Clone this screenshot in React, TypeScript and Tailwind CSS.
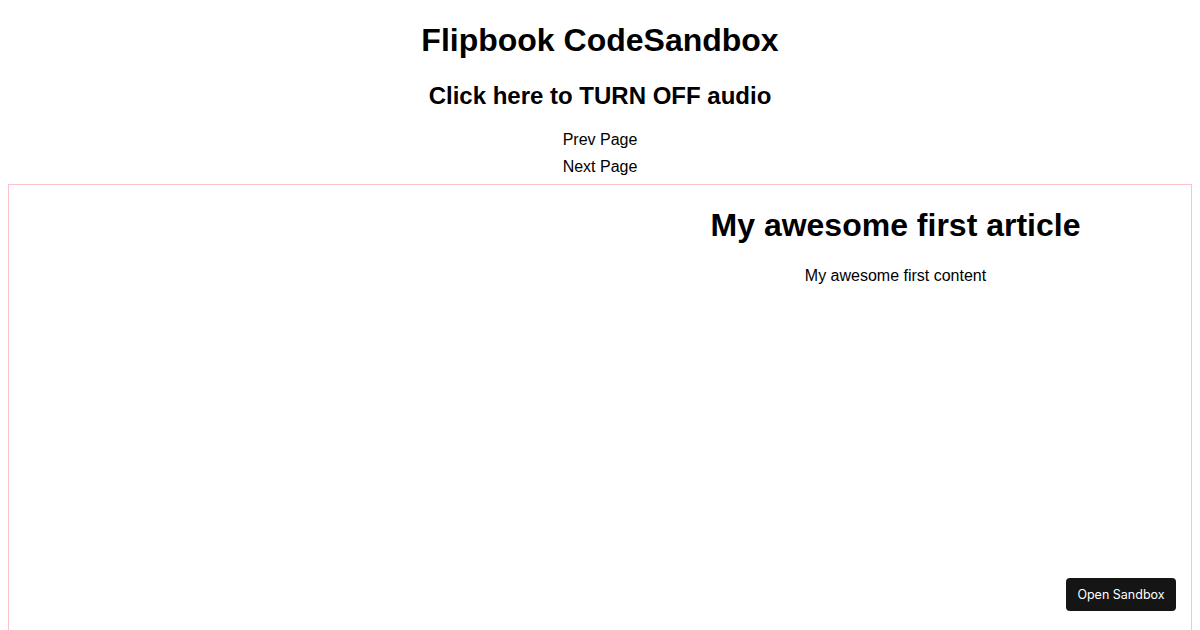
export default function App() {
  return (
    <div className="min-h-[630px] px-[8px] font-['Liberation_Sans',Arial,sans-serif] text-black bg-white overflow-hidden h-[630px] relative">
      <div className="text-center">
        <h1 className="pt-[22px] text-[32px] font-bold leading-[37px]">Flipbook CodeSandbox</h1>
        <h2 className="mt-[23px] text-[24px] font-bold leading-[28px]">Click here to TURN OFF audio</h2>
        <div className="mt-[21px] text-[16px] leading-[18px]">Prev Page</div>
        <div className="mt-[9px] text-[16px] leading-[18px]">Next Page</div>
      </div>
      <div className="mt-[8px] border border-[#ffc0cb] h-[700px] grid grid-cols-2">
        <div />
        <div className="text-center">
          <h1 className="mt-[22px] text-[32px] font-bold leading-[37px]">My awesome first article</h1>
          <p className="mt-[23px] text-[16px] leading-[18px]">My awesome first content</p>
        </div>
      </div>
      <button className="absolute right-[24px] bottom-[19px] w-[110px] h-[33px] pt-[2px] rounded-[4px] bg-[#151515] text-white text-[12.5px] font-['Inter',sans-serif] flex items-center justify-center">
        Open Sandbox
      </button>
    </div>
  );
}
